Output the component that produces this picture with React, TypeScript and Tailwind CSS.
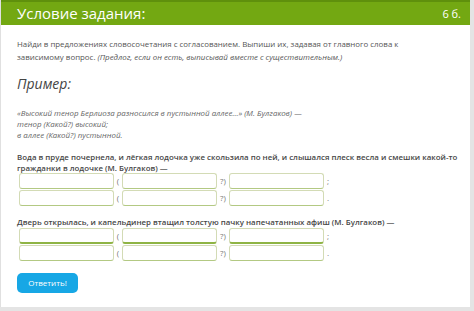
import React from "react";

const font = { fontFamily: '"Open Sans", "Noto Sans", sans-serif' };

function AnswerRow({ end, strong }: { end: string; strong?: boolean }) {
  const box = strong
    ? "h-[16px] w-[95px] rounded-[3px] border border-[#d3dbb5] border-b-2 border-b-[#8fb445] bg-white"
    : "h-[16px] w-[95px] rounded-[3px] border border-[#d3dbb5] border-b-[#b3c983] bg-white";
  return (
    <div className="flex h-[16px] items-center text-[8px] text-[#777]">
      <div className="ml-[2px]">
        <input className={box} />
      </div>
      <span className="w-[8px] text-center">(</span>
      <input className={box} />
      <span className="w-[12px] text-center">?)</span>
      <input className={box} />
      <span className="ml-[3px]">{end}</span>
    </div>
  );
}

function Group({ sentence, top, strongFirst }: { sentence: React.ReactNode; top: string; strongFirst?: boolean }) {
  return (
    <div className={top}>
      <p className="whitespace-nowrap text-[7.9px] font-semibold leading-[10.5px] text-[#474747]">{sentence}</p>
      <div className="flex flex-col gap-[1px]">
        <AnswerRow end=";" strong={strongFirst} />
        <AnswerRow end="." />
      </div>
    </div>
  );
}

export default function App() {
  return (
    <div className="h-[311px] w-[474px] bg-[#e4e4e4]" style={font}>
      <div className="h-[307px] w-[470px] border-l border-[#e0e0e0] bg-white">
        <header className="flex h-[25px] items-center justify-between border-t-2 border-[#5f900c] bg-[#73a812] pl-[16px] pr-[9px] text-white">
          <h1 className="text-[15px] leading-none">Условие задания:</h1>
          <span className="text-[11px] leading-none">6 б.</span>
        </header>

        <div className="px-[16px]">
          <p className="mt-[13px] text-[7.9px] leading-[13px] text-[#555]">
            Найди в предложениях словосочетания с согласованием. Выпиши их, задавая от главного слова к
            <br />
            зависимому вопрос. <i>(Предлог, если он есть, выписывай вместе с существительным.)</i>
          </p>

          <p className="mt-[11px] text-[14px] italic leading-[18px] text-[#444]">Пример:</p>

          <div className="mt-[15px] text-[7.9px] italic leading-[11px] text-[#666]">
            <p>«Высокий тенор Берлиоза разносился в пустынной аллее...» (М. Булгаков) —</p>
            <p>тенор (Какой?) высокий;</p>
            <p>в аллее (Какой?) пустынной.</p>
          </div>

          <Group
            top="mt-[11px]"
            sentence={
              <>
                Вода в пруде почернела, и лёгкая лодочка уже скользила по ней, и слышался плеск весла и смешки какой-то
                <br />
                гражданки в лодочке (М. Булгаков) —
              </>
            }
          />

          <Group
            top="mt-[11px]"
            strongFirst
            sentence="Дверь открылась, и капельдинер втащил толстую пачку напечатанных афиш (М. Булгаков) —"
          />

          <button className="mt-[12px] h-[20px] w-[61px] rounded-[5px] bg-[#17a7e5] text-[8px] text-white">
            Ответить!
          </button>
        </div>
      </div>
    </div>
  );
}
